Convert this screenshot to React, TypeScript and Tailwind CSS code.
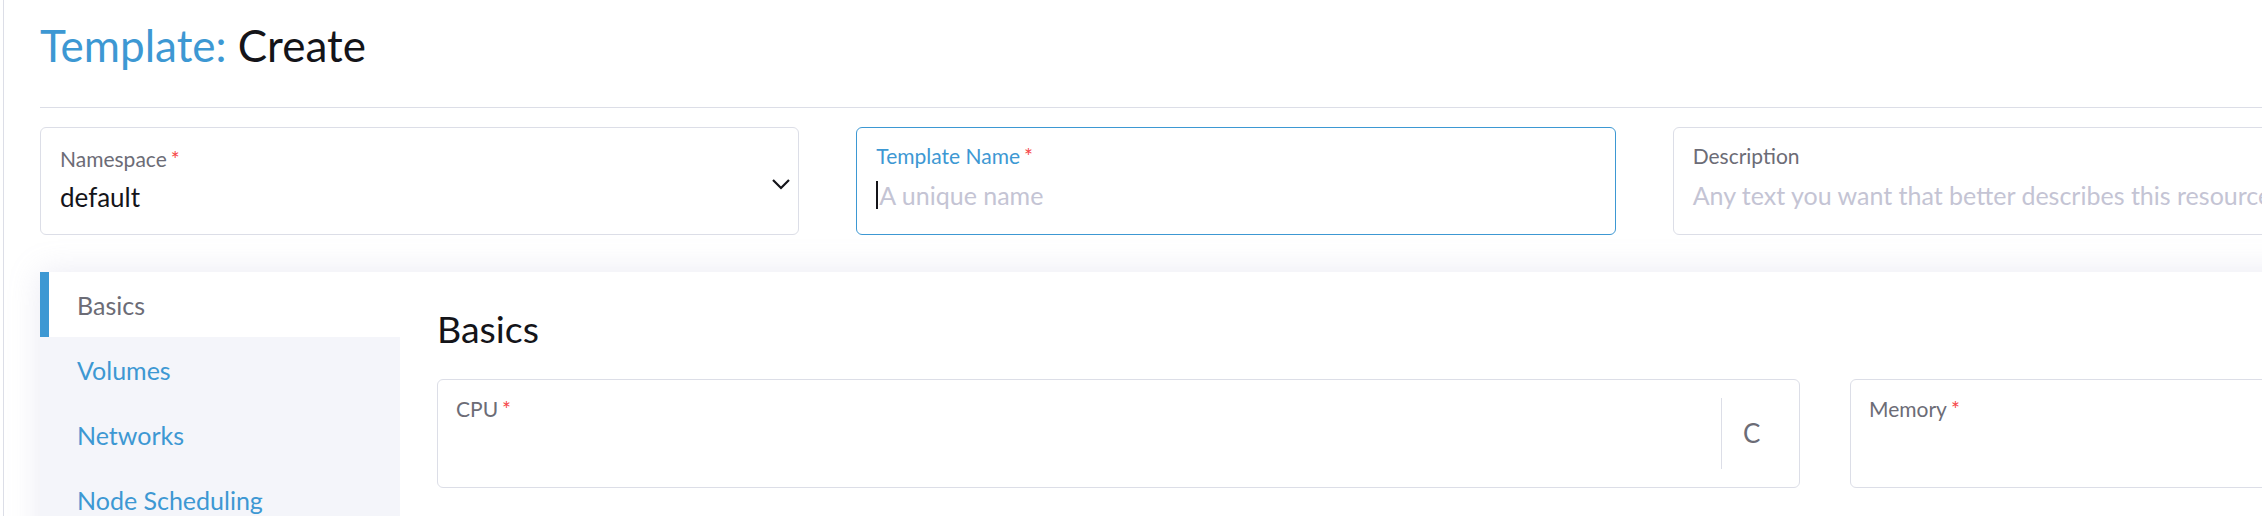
const tabs = ['Basics', 'Volumes', 'Networks', 'Node Scheduling'];

function Required() {
  return <span className="ml-[4px] text-[#f64747]">*</span>;
}

function LabeledInput({
  label,
  required,
  placeholder,
  focused,
}: {
  label: string;
  required?: boolean;
  placeholder: string;
  focused?: boolean;
}) {
  return (
    <div
      className={`h-[108px] overflow-hidden rounded-[6px] border px-[19px] pt-[15px] ${
        focused ? 'border-[#3d98d3]' : 'border-[#dcdee7]'
      }`}
    >
      <div
        className={`text-[21px] leading-[25px] ${focused ? 'text-[#3d98d3]' : 'text-[#6c6c76]'}`}
      >
        {label}
        {required && <Required />}
      </div>
      <div className="mt-[11px] flex items-center whitespace-nowrap text-[25px] leading-[32px] text-[#c4c4d4]">
        {focused && <span className="mr-[1px] h-[28px] w-[2px] bg-[#141419]" />}
        {placeholder}
      </div>
    </div>
  );
}

export default function App() {
  return (
    <div className="h-[516px] w-[2262px] overflow-hidden bg-white font-['Lato',sans-serif]">
      <div className="ml-[3px] h-full border-l border-[#dcdee7] pl-[36px]">
        <div className="w-[2392px]">
          {/* Header */}
          <h1 className="pt-[17px] text-[44px] leading-[56px] text-[#141419]">
            <span className="text-[#3d98d3]">Template:</span> Create
          </h1>
          <div className="mt-[34px] border-t border-[#dcdee7]" />

          {/* Namespace / name / description */}
          <div className="mt-[19px] grid grid-cols-3 gap-[57px]">
            <div className="relative h-[108px] rounded-[6px] border border-[#dcdee7] px-[19px] pt-[18px]">
              <div className="text-[21px] leading-[25px] text-[#6c6c76]">
                Namespace
                <Required />
              </div>
              <div className="mt-[10px] text-[26px] leading-[32px] text-[#141419]">default</div>
              <svg
                className="absolute left-[729px] top-[49px]"
                width="22"
                height="14"
                viewBox="0 0 22 14"
                fill="none"
              >
                <path d="M3 3 L11 11 L19 3" stroke="#141419" strokeWidth="2.2" />
              </svg>
            </div>
            <LabeledInput label="Template Name" required placeholder="A unique name" focused />
            <LabeledInput
              label="Description"
              placeholder="Any text you want that better describes this resource"
            />
          </div>

          {/* Tabbed section */}
          <div className="mt-[37px] flex h-[300px] bg-white shadow-[0_0_30px_0_rgba(160,160,200,0.22)]">
            <div className="w-[360px] shrink-0 bg-[#f4f5fa]">
              {tabs.map((t, i) => (
                <div
                  key={t}
                  className={`flex h-[65px] items-center border-l-[9px] pl-[28px] text-[25px] leading-[30px] ${
                    i === 0
                      ? 'border-[#3d98d3] bg-white text-[#6c6c76]'
                      : 'border-transparent text-[#3d98d3]'
                  }`}
                >
                  {t}
                </div>
              ))}
            </div>
            <div className="min-w-0 flex-1 overflow-hidden pl-[37px] pt-[35px]">
              <h2 className="text-[37.5px] leading-[44px] text-[#141419]">Basics</h2>
              <div className="mt-[28px] flex gap-[50px]">
                <div className="flex h-[109px] w-[1363px] shrink-0 rounded-[6px] border border-[#dcdee7]">
                  <div className="flex-1 pl-[18px] pt-[16px] text-[21px] leading-[25px] text-[#6c6c76]">
                    CPU
                    <Required />
                  </div>
                  <div className="my-[18px] w-[78px] border-l border-[#dcdee7] pl-[21px] pt-[19px] text-[26px] leading-[32px] text-[#6c6c76]">
                    C
                  </div>
                </div>
                <div className="h-[109px] w-[1363px] shrink-0 rounded-[6px] border border-[#dcdee7] pl-[18px] pt-[16px] text-[21px] leading-[25px] text-[#6c6c76]">
                  Memory
                  <Required />
                </div>
              </div>
            </div>
          </div>
        </div>
      </div>
    </div>
  );
}
